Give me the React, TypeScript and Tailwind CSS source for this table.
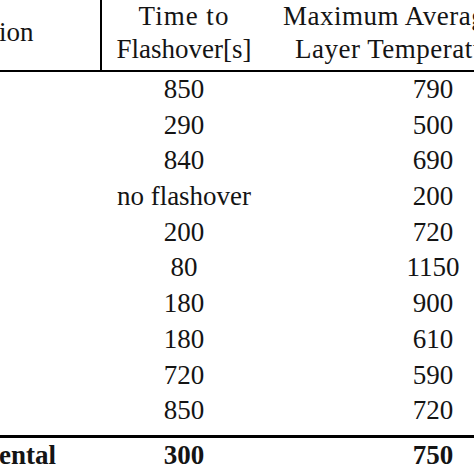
import React from "react";

const rows: [string, string][] = [
  ["850", "790"],
  ["290", "500"],
  ["840", "690"],
  ["no flashover", "200"],
  ["200", "720"],
  ["80", "1150"],
  ["180", "900"],
  ["180", "610"],
  ["720", "590"],
  ["850", "720"],
];

export default function App() {
  return (
    <div
      className="w-[474px] h-[474px] overflow-hidden bg-white text-[#141414] text-[27px]"
      style={{ fontFamily: '"Liberation Serif", "Times New Roman", serif' }}
    >
      <div className="w-[600px]">
        {/* header */}
        <div className="grid grid-cols-[102px_164px_334px] h-[72px] border-b-2 border-black">
          <div className="border-r-2 border-black flex items-center pb-[6px] leading-[34px] whitespace-nowrap">
            <span className="-ml-[1px]">ion</span>
          </div>
          <div className="flex flex-col items-center leading-[33px] whitespace-nowrap">
            <span className="tracking-[1px]">Time to</span>
            <span>Flashover[s]</span>
          </div>
          <div className="flex flex-col leading-[33px] whitespace-nowrap tracking-[0.5px]">
            <span className="pl-[17px]">Maximum Average</span>
            <span className="pl-[29px]">Layer Temperature</span>
          </div>
        </div>
        {/* body */}
        <div className="pb-[6px]">
          {rows.map(([a, b], i) => (
            <div
              key={i}
              className="grid grid-cols-[102px_164px_334px] h-[35.7px] leading-[35.7px] whitespace-nowrap"
            >
              <div />
              <div className="text-center">{a}</div>
              <div className="text-center">{b}</div>
            </div>
          ))}
        </div>
        <div className="grid grid-cols-[102px_164px_334px] h-[36px] leading-[34px] border-t-[3px] border-black font-bold whitespace-nowrap">
          <div className="-ml-[1px]">ental</div>
          <div className="text-center">300</div>
          <div className="text-center">750</div>
        </div>
      </div>
    </div>
  );
}
